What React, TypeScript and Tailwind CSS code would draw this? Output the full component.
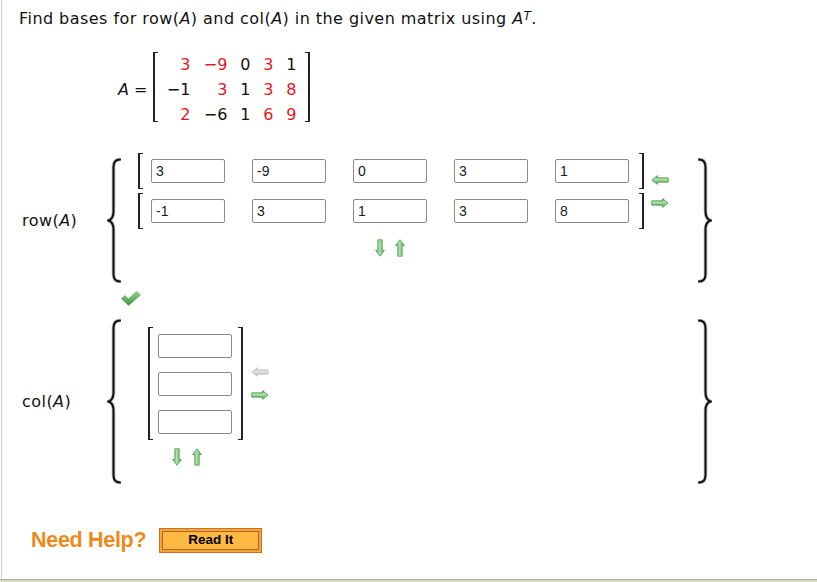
import React from "react";

function Brace({ h, right = false }: { h: number; right?: boolean }) {
  const m = h / 2;
  const d = `M13,1.5 C8.5,1.5 6.5,3.5 6.5,9 L6.5,${m - 9} C6.5,${m - 3} 4.5,${m - 1} 1.5,${m} C4.5,${m + 1} 6.5,${m + 3} 6.5,${m + 9} L6.5,${h - 9} C6.5,${h - 3.5} 8.5,${h - 1.5} 13,${h - 1.5}`;
  return (
    <svg width="14" height={h} viewBox={`0 0 14 ${h}`} className="block shrink-0">
      <g transform={right ? "translate(14,0) scale(-1,1)" : undefined}>
        <path d={d} fill="none" stroke="#bbb" strokeWidth="3.6" strokeLinecap="round" />
        <path d={d} fill="none" stroke="#111" strokeWidth="2" strokeLinecap="round" />
      </g>
    </svg>
  );
}

function HArrow({ dir, gray = false, id }: { dir: "left" | "right"; gray?: boolean; id: string }) {
  const c1 = gray ? "#e4e4e4" : "#b4e2b0";
  const c2 = gray ? "#b8b8b8" : "#3f9d48";
  const st = gray ? "#c4c4c4" : "#4d9f52";
  return (
    <svg width="18" height="10" viewBox="0 0 18 10" className="block">
      <defs>
        <linearGradient id={id} x1="0" y1="0" x2="0" y2="1">
          <stop offset="0" stopColor={c2} />
          <stop offset="0.4" stopColor={c1} />
          <stop offset="1" stopColor={c2} />
        </linearGradient>
      </defs>
      <g transform={dir === "right" ? "translate(18,0) scale(-1,1)" : undefined}>
        <path d="M0.8 5 L6.5 0.6 L6.5 2.8 L17.2 2.8 L17.2 7.2 L6.5 7.2 L6.5 9.4 Z" fill={`url(#${id})`} stroke={st} strokeWidth="0.8" strokeLinejoin="round" />
      </g>
    </svg>
  );
}

function VArrow({ dir, id }: { dir: "up" | "down"; id: string }) {
  return (
    <svg width="10" height="18" viewBox="0 0 10 18" className="block">
      <defs>
        <linearGradient id={id} x1="0" y1="0" x2="1" y2="0">
          <stop offset="0" stopColor="#3f9d48" />
          <stop offset="0.45" stopColor="#b4e2b0" />
          <stop offset="1" stopColor="#3f9d48" />
        </linearGradient>
      </defs>
      <g transform={dir === "down" ? "translate(0,18) scale(1,-1)" : undefined}>
        <path d="M5 0.8 L9.4 6.5 L7.2 6.5 L7.2 17.2 L2.8 17.2 L2.8 6.5 L0.6 6.5 Z" fill={`url(#${id})`} stroke="#4d9f52" strokeWidth="0.8" strokeLinejoin="round" />
      </g>
    </svg>
  );
}

function Check() {
  return (
    <svg width="20" height="15" viewBox="0 0 20 15" className="block">
      <defs>
        <linearGradient id="chk" x1="0" y1="0" x2="0" y2="1">
          <stop offset="0" stopColor="#8fd48a" />
          <stop offset="1" stopColor="#3c9a3f" />
        </linearGradient>
      </defs>
      <path d="M0.5 7.5 L4 4.5 L7.5 8 L15.5 0.5 L19.5 4 L7.5 14.5 Z" fill="url(#chk)" stroke="#4ea24f" strokeWidth="0.6" strokeLinejoin="round" />
    </svg>
  );
}

function Input({ v }: { v?: string }) {
  return (
    <div className="w-[74px] h-[24px] border border-[#8a8a8a] rounded-[2px] bg-white flex items-center pl-[4px] text-[14px] text-[#1a1a1a] font-['Liberation_Sans',Arial,sans-serif] shrink-0">
      {v}
    </div>
  );
}

function LB({ h }: { h: string }) {
  return <span className={`block w-[5px] ${h} border-l-[2px] border-t-[1.5px] border-b-[1.5px] border-[#222] shrink-0`} />;
}
function RB({ h }: { h: string }) {
  return <span className={`block w-[5px] ${h} border-r-[2px] border-t-[1.5px] border-b-[1.5px] border-[#222] shrink-0`} />;
}

const R = "text-[#e8161b]";

export default function App() {
  const mat: [string, boolean][][] = [
    [["3", true], ["\u22129", true], ["0", false], ["3", true], ["1", false]],
    [["\u22121", false], ["3", true], ["1", false], ["3", true], ["8", true]],
    [["2", true], ["\u22126", false], ["1", false], ["6", true], ["9", true]],
  ];
  const colW = ["w-[32px]", "w-[37px]", "w-[23px]", "w-[23px]", "w-[23px]"];
  return (
    <div className="w-[817px] h-[582px] bg-white flex flex-col font-['DejaVu_Sans',Verdana,sans-serif] text-[#111] tracking-[0.45px]">
      <div className="flex-1 ml-px border-l border-[#cfcfcf] flex flex-col">
        <div className="pl-[17px] pt-[8px] text-[16px] leading-[22px]">
          Find bases for row(<i>A</i>) and col(<i>A</i>) in the given matrix using <i>A</i>
          <sup className="text-[12px] italic relative -top-[4px]">T</sup>.
        </div>

        <div className="mt-[22px] ml-[116px] flex items-center text-[16px] tracking-normal">
          <span className="mr-[6px]">
            <i>A</i> =
          </span>
          <div className="flex items-stretch">
            <LB h="h-[70px]" />
            <div className="flex flex-col justify-center">
              {mat.map((row, i) => (
                <div key={i} className="flex leading-[25px]">
                  {row.map(([t, red], j) => (
                    <span key={j} className={`${colW[j]} text-right ${red ? R : ""}`}>
                      {t}
                    </span>
                  ))}
                </div>
              ))}
            </div>
            <span className="w-[9px]" />
            <RB h="h-[70px]" />
          </div>
        </div>

        {/* row(A) */}
        <div className="mt-[26px] ml-[20px] flex items-start">
          <div className="w-[85px] h-[125px] mt-[5px] flex items-center">
            row(<i>A</i>)
          </div>
          <div className="mt-[5px]">
            <Brace h={125} />
          </div>
          <div className="w-[577px] flex flex-col">
            <div className="flex items-center pl-[17px]">
              <div className="flex flex-col gap-[4px]">
                {[
                  ["3", "-9", "0", "3", "1"],
                  ["-1", "3", "1", "3", "8"],
                ].map((r, i) => (
                  <div key={i} className="flex items-center h-[36px]">
                    <LB h="h-[36px]" />
                    <div className="ml-[8px] flex gap-[27px] tracking-normal">
                      {r.map((v, j) => (
                        <Input key={j} v={v} />
                      ))}
                    </div>
                    <span className="w-[10px]" />
                    <RB h="h-[36px]" />
                  </div>
                ))}
              </div>
              <div className="ml-[7px] flex flex-col gap-[13px]">
                <HArrow dir="left" id="ra1" />
                <HArrow dir="right" id="ra2" />
              </div>
            </div>
            <div className="mt-[10px] ml-[254px] flex gap-[10px]">
              <VArrow dir="down" id="rv1" />
              <VArrow dir="up" id="rv2" />
            </div>
          </div>
          <div className="mt-[5px]">
            <Brace h={125} right />
          </div>
        </div>

        <div className="ml-[119px] mt-[8px]">
          <Check />
        </div>

        {/* col(A) */}
        <div className="mt-[13px] ml-[20px] flex items-start">
          <div className="w-[85px] h-[165px] flex items-center">
            col(<i>A</i>)
          </div>
          <Brace h={165} />
          <div className="w-[577px] flex flex-col pt-[8px]">
            <div className="flex items-center pl-[27px]">
              <LB h="h-[113px]" />
              <div className="ml-[5px] flex flex-col gap-[14px] py-[5px]">
                <Input />
                <Input />
                <Input />
              </div>
              <span className="w-[6px]" />
              <RB h="h-[113px]" />
              <div className="ml-[8px] flex flex-col gap-[13px]">
                <HArrow dir="left" gray id="ca1" />
                <HArrow dir="right" id="ca2" />
              </div>
            </div>
            <div className="mt-[8px] ml-[51px] flex gap-[10px]">
              <VArrow dir="down" id="cv1" />
              <VArrow dir="up" id="cv2" />
            </div>
          </div>
          <Brace h={165} right />
        </div>

        <div className="mt-[40px] ml-[29px] flex items-center tracking-normal">
          <span className="text-[21.5px] font-bold text-[#f0891c] font-['Liberation_Sans',Arial,sans-serif] tracking-[-0.3px]">
            Need Help?
          </span>
          <div className="ml-[13px] w-[103px] h-[25px] border border-[#c9741a] bg-[#f8a23a] p-[2px]">
            <div className="w-full h-full border border-[#a56a2c] bg-[#fdb944] flex items-center justify-center text-[13.5px] font-bold text-black font-['Liberation_Sans',Arial,sans-serif]">
              Read It
            </div>
          </div>
        </div>
      </div>
      <div className="h-px bg-[#a9a9a9]" />
      <div className="h-[2px] bg-[#cfe3b5]" />
    </div>
  );
}
